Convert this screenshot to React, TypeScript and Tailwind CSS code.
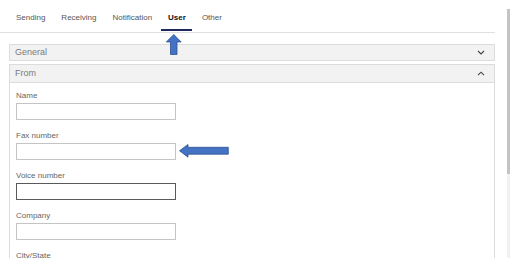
import React from "react";

const tabs = ["Sending", "Receiving", "Notification", "User", "Other"];

function Field({ label, dark }: { label: string; dark?: boolean }) {
  return (
    <div className="flex flex-col">
      <div className="h-[10px] text-[8px] leading-[10px] text-[#666]">{label}</div>
      <div
        className={
          "mt-[2px] h-[17px] w-[160px] bg-white " +
          (dark ? "border border-[#5a5a5a]" : "border border-[#c4c4c4]")
        }
      />
    </div>
  );
}

function Chevron({ up }: { up?: boolean }) {
  return (
    <svg width="8" height="5" viewBox="0 0 8 5" className="mr-[9px]">
      <polyline
        points={up ? "1,4.2 4,1.2 7,4.2" : "1,1 4,4 7,1"}
        fill="none"
        stroke="#444"
        strokeWidth="1.1"
      />
    </svg>
  );
}

export default function App() {
  return (
    <div
      className="relative flex h-[258px] w-[510px] overflow-hidden bg-white"
      style={{ fontFamily: '"Liberation Sans", Arial, sans-serif' }}
    >
      <div className="w-[507px] shrink-0">
        <div className="flex h-[33px] w-[495px] border-b border-[#e0e0e0] pl-2">
          {tabs.map((t) => (
            <div
              key={t}
              className={
                "relative flex h-[32px] items-center px-2 pt-[4px] text-[8px] " +
                (t === "User" ? "font-bold text-[#111]" : "text-[#555]")
              }
            >
              {t}
              {t === "User" && (
                <div className="absolute bottom-[1px] left-[1px] right-[2px] h-[2px] bg-[#1e2a5e]" />
              )}
            </div>
          ))}
        </div>

        <div className="ml-[9px] mt-[11px] w-[486px]">
          <div className="flex h-[17px] items-center justify-between border border-[#dcdcdc] bg-[#f2f2f2] pl-[5px] text-[9px] text-[#7a7a7a]">
            <span>General</span>
            <Chevron />
          </div>

          <div className="mt-[3px] h-[200px] border border-[#dcdcdc]">
            <div className="flex h-[18px] items-center justify-between border-b border-[#dcdcdc] bg-[#f2f2f2] pl-[5px] text-[9px] text-[#7a7a7a]">
              <span>From</span>
              <Chevron up />
            </div>
            <div className="flex flex-col gap-[11px] pl-[6px] pt-[8px]">
              <Field label="Name" />
              <Field label="Fax number" />
              <Field label="Voice number" dark />
              <Field label="Company" />
              <Field label="City/State" />
            </div>
          </div>
        </div>
      </div>

      <div className="flex w-[3px] shrink-0 flex-col bg-[#f1f1f1]">
        <div className="h-[9px] bg-white" />
        <div className="h-[165px] bg-[#c4c4c4]" />
      </div>

      <svg
        className="absolute left-[166px] top-[34px]"
        width="16"
        height="21"
        viewBox="0 0 16 21"
      >
        <polygon
          points="7.75,0.5 15.2,8 11,8 11,20.5 4.5,20.5 4.5,8 0.3,8"
          fill="#4472c4"
          stroke="#2f528f"
          strokeWidth="0.8"
        />
      </svg>

      <svg
        className="absolute left-[179px] top-[144px]"
        width="50"
        height="14"
        viewBox="0 0 50 14"
      >
        <polygon
          points="0.5,6.75 9,0.5 9,3.3 49.3,3.3 49.3,10.2 9,10.2 9,13.2"
          fill="#4472c4"
          stroke="#2f528f"
          strokeWidth="0.8"
        />
      </svg>
    </div>
  );
}
